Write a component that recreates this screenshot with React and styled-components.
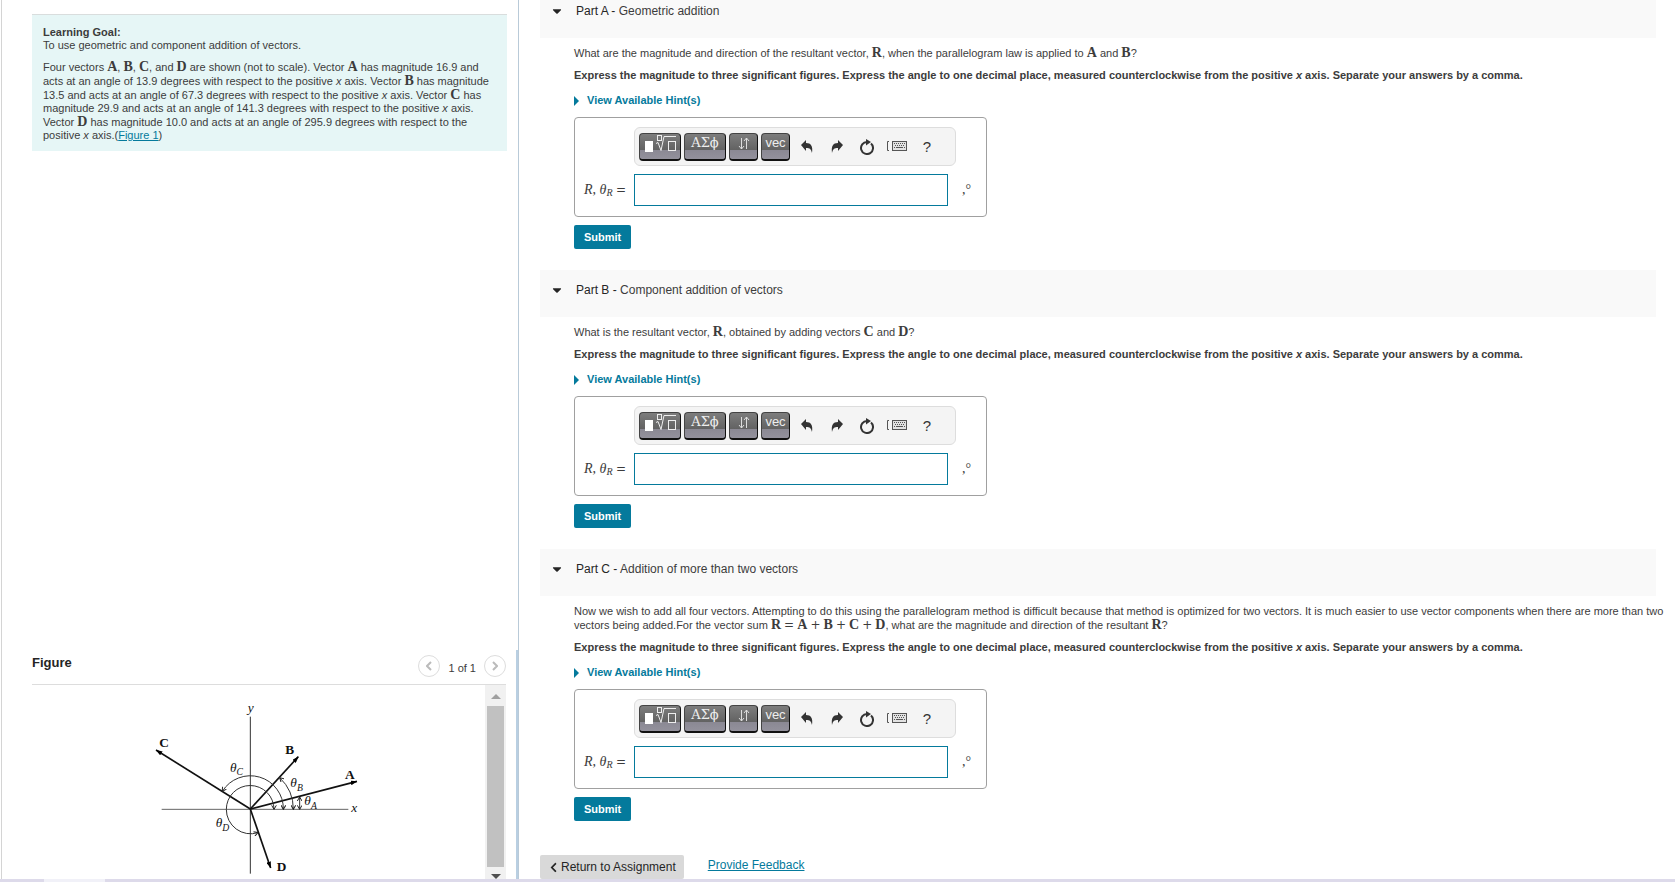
import React, { useId } from 'react'
import styled, { createGlobalStyle } from 'styled-components'
import { FaCaretDown, FaChevronLeft } from 'react-icons/fa'

const hintText = (
    <>
        Express the magnitude to three significant figures. Express the angle to one decimal place, measured
        counterclockwise from the positive <i>x</i> axis. Separate your answers by a comma.
    </>
)

const parts = [
    {
        name: 'Part A',
        title: 'Geometric addition',
        question: (
            <>
                What are the magnitude and direction of the resultant vector, <Vec>R</Vec>, when the parallelogram law is
                applied to <Vec>A</Vec> and <Vec>B</Vec>?
            </>
        ),
    },
    {
        name: 'Part B',
        title: 'Component addition of vectors',
        question: (
            <>
                What is the resultant vector, <Vec>R</Vec>, obtained by adding vectors <Vec>C</Vec> and <Vec>D</Vec>?
            </>
        ),
    },
    {
        name: 'Part C',
        title: 'Addition of more than two vectors',
        question: (
            <>
                Now we wish to add all four vectors. Attempting to do this using the parallelogram method is difficult
                because that method is optimized for two vectors. It is much easier to use vector components when there
                are more than two vectors being added.For the vector sum <Vec>R</Vec> <Op>=</Op> <Vec>A</Vec> <Op>+</Op>{' '}
                <Vec>B</Vec> <Op>+</Op> <Vec>C</Vec> <Op>+</Op> <Vec>D</Vec>, what are the magnitude and direction of the
                resultant <Vec>R</Vec>?
            </>
        ),
    },
]

function Vec({ children }) {
    return <Vector>{children}</Vector>
}

function Op({ children }) {
    return <Operator>{children}</Operator>
}

const Toolbar = () => (
    <ToolbarWrapper>
        <KeyGroup>
            <Key $wide $icon aria-label="Templates">
                <svg width="32" height="20" viewBox="0 0 32 20" fill="none" stroke="#eee">
                    <rect x="1" y="7" width="8" height="11" fill="#fff" stroke="none" />
                    <rect x="13.5" y="1.5" width="4" height="5" />
                    <path d="M12 9.500l2-1 3 8 3-14h12" />
                    <rect x="24.5" y="7.5" width="7" height="9" />
                </svg>
            </Key>
            <Key $wide $serif>ΑΣϕ</Key>
            <Key $icon aria-label="Arrows">
                <svg width="12" height="18" viewBox="0 0 12 18" fill="none" stroke="#ddd">
                    <path d="M3.500 4v11M1 12l2.500 3 2.500-3M8.500 15V4M6 7l2.500-3 2.500 3" />
                </svg>
            </Key>
            <Key>vec</Key>
        </KeyGroup>
        <ToolGroup>
            <Tool aria-label="Undo">
                <svg width="12" height="13" viewBox="0 0 12 13" fill="#333">
                    <path d="M0 5l5-5v3c5 0 7 3 6 10-1-4-2-5-6-5v3z" />
                </svg>
            </Tool>
            <Tool aria-label="Redo">
                <svg width="12" height="13" viewBox="0 0 12 13" fill="#333">
                    <path d="M12 5l-5-5v3c-5 0-7 3-6 10 1-4 2-5 6-5v3z" />
                </svg>
            </Tool>
            <Tool aria-label="Reset">
                <svg width="14" height="16" viewBox="0 0 14 16" fill="none" stroke="#333" strokeWidth="2">
                    <path d="M11 4.500A6 6 0 1 1 7 3" />
                    <path d="M6 0l5 3-5 3.500z" fill="#333" stroke="none" />
                </svg>
            </Tool>
            <Tool aria-label="Keyboard">
                <svg width="20" height="11" viewBox="0 0 20 11" fill="none" stroke="#555">
                    <path d="M2 .5H.5v9H2" />
                    <rect x="5.500" y=".5" width="14" height="9" fill="#e2e2e2" />
                    <path d="M7 2.500h11M8 4.500h10" strokeDasharray="1 1" />
                    <path d="M7 6.500h1M9 6.500h7M17 6.500h1" />
                </svg>
            </Tool>
            <Tool aria-label="Help">?</Tool>
        </ToolGroup>
    </ToolbarWrapper>
)

const Part = ({ name, title, question }) => {
    const id = useId()
    return (
        <PartSection>
            <PartHeader>
                <Collapse aria-label={`Collapse ${name}`}>
                    <FaCaretDown size={14} />
                </Collapse>
                <PartTitle>
                    <span>{name} -</span> {title}
                </PartTitle>
            </PartHeader>
            <PartBody>
                <Question>{question}</Question>
                <Instructions>{hintText}</Instructions>
                <HintButton>
                    <svg width="5" height="10" viewBox="0 0 5 10" fill="#047a9c">
                        <path d="M0 0l5 5-5 5z" />
                    </svg>
                    View Available Hint(s)
                </HintButton>
                <AnswerBox>
                    <Toolbar />
                    <AnswerLabel htmlFor={id}>
                        <i>R</i>, <i>θ</i>
                        <sub>R</sub> <Op>=</Op>
                    </AnswerLabel>
                    <AnswerInput id={id} type="text" />
                    <Unit>
                        ,<sup>°</sup>
                    </Unit>
                </AnswerBox>
                <Submit>Submit</Submit>
            </PartBody>
        </PartSection>
    )
}

const VectorDiagram = () => (
    <Diagram viewBox="0 0 750 567" role="img" aria-label="Vectors A, B, C and D">
        <defs>
            <marker id="head" viewBox="0 0 20 14" refX="19" refY="7" markerWidth="20" markerHeight="14"
                markerUnits="userSpaceOnUse" orient="auto">
                <path d="M0 0L20 7L0 14z" />
            </marker>
            <marker id="tip" viewBox="0 0 14 16" refX="13" refY="8" markerWidth="14" markerHeight="16"
                markerUnits="userSpaceOnUse" orient="auto-start-reverse">
                <path d="M1 1L13 8L1 15" fill="none" stroke="#222" strokeWidth="3" />
            </marker>
        </defs>
        <g stroke="#333" strokeWidth="3">
            <path d="M361 80V551" />
            <path d="M95 358H655" stroke="#666" />
        </g>
        <g stroke="#111" strokeWidth="5">
            <path d="M361 357L681 274" markerEnd="url(#head)" />
            <path d="M361 357L505 200" markerEnd="url(#head)" />
            <path d="M361 357L78 180" markerEnd="url(#head)" />
            <path d="M361 357L422 534" markerEnd="url(#head)" />
        </g>
        <g fill="none" stroke="#333" strokeWidth="3">
            <path d="M432 358A71 71 0 0 0 289 358A73 73 0 0 0 384 428" markerStart="url(#tip)" markerEnd="url(#tip)" />
            <path d="M460 358A99 99 0 0 0 277 304" markerStart="url(#tip)" markerEnd="url(#tip)" />
            <path d="M490 358A129 129 0 0 0 449 263" markerStart="url(#tip)" markerEnd="url(#tip)" />
            <path d="M509 358V321" markerStart="url(#tip)" markerEnd="url(#tip)" />
        </g>
        <DiagramText $bold>
            <text x="88" y="171">C</text>
            <text x="466" y="193">B</text>
            <text x="645" y="266">A</text>
            <text x="440" y="543">D</text>
        </DiagramText>
        <DiagramText>
            <text x="353" y="66">y</text>
            <text x="664" y="367">x</text>
            <text x="300" y="245">θ<tspan dy="10" fontSize="29">C</tspan></text>
            <text x="481" y="292">θ<tspan dy="10" fontSize="29">B</tspan></text>
            <text x="523" y="346">θ<tspan dy="11" fontSize="29">A</tspan></text>
            <text x="257" y="412">θ<tspan dy="10" fontSize="29">D</tspan></text>
        </DiagramText>
    </Diagram>
)

const Chevron = ({ d }) => (
    <svg width="6" height="10" viewBox="0 0 6 10" fill="none" stroke="#bbb" strokeWidth="2">
        <path d={d} />
    </svg>
)

const App = () => {
    return (
        <>
            <GlobalStyle />
            <Page>
                <Columns>
                    <Sidebar>
                        <Goal>
                            <GoalTitle>Learning Goal:</GoalTitle>
                            <GoalText>To use geometric and component addition of vectors.</GoalText>
                            <GoalDetails>
                                Four vectors <Vec>A</Vec>, <Vec>B</Vec>, <Vec>C</Vec>, and <Vec>D</Vec> are shown (not to
                                scale). Vector <Vec>A</Vec> has magnitude 16.9 and acts at an angle of 13.9 degrees with
                                respect to the positive <i>x</i> axis. Vector <Vec>B</Vec> has magnitude 13.5 and acts at
                                an angle of 67.3 degrees with respect to the positive <i>x</i> axis. Vector <Vec>C</Vec>{' '}
                                has magnitude 29.9 and acts at an angle of 141.3 degrees with respect to the positive{' '}
                                <i>x</i> axis. Vector <Vec>D</Vec> has magnitude 10.0 and acts at an angle of 295.9 degrees
                                with respect to the positive <i>x</i> axis.(<Link href="#figure">Figure 1</Link>)
                            </GoalDetails>
                        </Goal>
                        <FigurePanel id="figure">
                            <FigureHeader>
                                <FigureTitle>Figure</FigureTitle>
                                <Pager>
                                    <RoundButton aria-label="Previous figure"><Chevron d="M5 1L1 5l4 4" /></RoundButton>
                                    <PageCount>1 of 1</PageCount>
                                    <RoundButton aria-label="Next figure"><Chevron d="M1 1l4 4-4 4" /></RoundButton>
                                </Pager>
                            </FigureHeader>
                            <FigureBody>
                                <VectorDiagram />
                                <Scrollbar>
                                    <ArrowUp />
                                    <Thumb />
                                    <ArrowDown />
                                </Scrollbar>
                            </FigureBody>
                        </FigurePanel>
                    </Sidebar>
                    <Main>
                        {parts.map((part) => (
                            <Part key={part.name} {...part} />
                        ))}
                        <Footer>
                            <ReturnButton>
                                <FaChevronLeft size={11} />
                                Return to Assignment
                            </ReturnButton>
                            <Link href="#feedback">Provide Feedback</Link>
                        </Footer>
                    </Main>
                </Columns>
                <BottomStrip>
                    <StripTab />
                </BottomStrip>
            </Page>
        </>
    )
}

export default App

const GlobalStyle = createGlobalStyle`
    * {
        box-sizing: border-box;
    }
    body {
        margin: 0;
        overflow: hidden;
        background: #fff;
        color: #3c3c3c;
        font: 11px/13px "Liberation Sans", Arial, sans-serif;
    }
    button {
        padding: 0;
        border: 0;
        background: none;
        color: inherit;
        font: inherit;
        cursor: pointer;
    }
    p, h1, h2 {
        margin: 0;
    }
`
const Page = styled.div`
    display: flex;
    flex-direction: column;
    height: 100vh;
    overflow: hidden;
`
const Columns = styled.div`
    display: flex;
    flex: 1;
    min-height: 0;
    overflow: hidden;
`
const Sidebar = styled.aside`
    display: flex;
    flex: 0 0 518px;
    flex-direction: column;
    justify-content: space-between;
    margin-left: 1px;
    border-left: 1px solid #d4d4d4;
    border-right: 1px solid #b9cad8;
`
const Goal = styled.section`
    margin: 14px 11px 0 30px;
    padding: 10px 11px 9px;
    border-top: 1px solid #d9dddd;
    background: #e6f6f6;
`
const GoalTitle = styled.h2`
    font-size: 11px;
    line-height: 14px;
`
const GoalText = styled.p``
const GoalDetails = styled.p`
    margin-top: 8px;
`
const Vector = styled.b`
    font-family: "Liberation Serif", "Times New Roman", serif;
    font-size: 14px;
    line-height: 13px;
`
const Operator = styled.span`
    font-family: "DejaVu Serif", serif;
    font-size: 12px;
    line-height: 13px;
`
const Link = styled.a`
    color: #047a9c;
`
const FigurePanel = styled.section`
    padding: 5px 10px 0 30px;
    border-right: 2px solid #b9cfe2;
`
const FigureHeader = styled.header`
    display: flex;
    align-items: flex-start;
    justify-content: space-between;
    padding-bottom: 7px;
    border-bottom: 1px solid #ddd;
`
const FigureTitle = styled.h2`
    color: #252525;
    font-size: 13px;
    line-height: 16px;
`
const Pager = styled.div`
    display: flex;
    align-items: flex-end;
    gap: 8px;
`
const PageCount = styled.span`
    line-height: 18px;
`
const RoundButton = styled.button`
    display: flex;
    align-items: center;
    justify-content: center;
    width: 22px;
    height: 22px;
    border: 1px solid #ddd;
    border-radius: 50%;
`
const FigureBody = styled.div`
    display: flex;
    height: 194px;
    justify-content: space-between;
`
const Diagram = styled.svg`
    width: 250px;
    height: 189px;
    margin: 5px 0 0 98px;
`
const DiagramText = styled.g`
    fill: #111;
    font-family: "Liberation Serif", "Times New Roman", serif;
    font-size: 40px;
    font-style: ${({ $bold }) => ($bold ? 'normal' : 'italic')};
    font-weight: ${({ $bold }) => ($bold ? 'bold' : 'normal')};
`
const Scrollbar = styled.div`
    display: flex;
    flex-direction: column;
    align-items: center;
    gap: 7px;
    width: 21px;
    padding-top: 9px;
    background: #f1f1f1;
`
const ArrowUp = styled.span`
    border: 5px solid transparent;
    border-top: 0;
    border-bottom-color: #a0a0a0;
`
const ArrowDown = styled.span`
    border: 5px solid transparent;
    border-bottom: 0;
    border-top-color: #505050;
`
const Thumb = styled.div`
    flex: 1;
    width: 17px;
    background: #c1c1c1;
`
const Main = styled.main`
    flex: 1;
    min-width: 0;
    /* the first header is partly scrolled out of view */
    margin-top: -9px;
    padding: 0 19px 0 21px;
`
const PartSection = styled.section`
    margin-bottom: 21px;
`
const PartHeader = styled.header`
    display: flex;
    align-items: flex-start;
    padding: 11px 0 18px 10px;
    background: #f9f9f9;
`
const Collapse = styled.button`
    display: flex;
    align-items: center;
    width: 26px;
    height: 18px;
    color: #252525;
`
const PartTitle = styled.h2`
    font-size: 12px;
    font-weight: normal;
    line-height: 18px;

    span {
        color: #252525;
    }
`
const PartBody = styled.div`
    margin-right: -14px;
    padding: 8px 0 0 34px;
`
const Question = styled.p`
    line-height: 14px;
`
const Instructions = styled.p`
    margin-top: 9px;
    font-weight: bold;
`
const HintButton = styled.button`
    display: flex;
    align-items: center;
    gap: 8px;
    margin: 12px 0 10px;
    color: #047a9c;
    font-weight: bold;
`
const AnswerBox = styled.div`
    display: grid;
    grid-template-columns: 50px 314px auto;
    gap: 8px 0;
    width: 413px;
    padding: 9px 9px 10px;
    border: 1px solid #a0a0a0;
    border-radius: 4px;
`
const ToolbarWrapper = styled.div`
    display: flex;
    grid-column: 2 / 4;
    align-items: center;
    justify-self: start;
    width: 322px;
    height: 39px;
    padding: 0 4px;
    border: 1px solid #ddd;
    border-radius: 6px;
    background: #f4f4f4;
`
const KeyGroup = styled.div`
    display: flex;
    gap: 3px;
`
const Key = styled.button`
    display: flex;
    align-items: flex-start;
    justify-content: center;
    width: ${({ $wide }) => ($wide ? '42px' : '29px')};
    height: 28px;
    padding-top: ${({ $icon }) => ($icon ? '0' : '2px')};
    border: 1px solid #444;
    border-right-color: #111;
    border-bottom: 2px solid #111;
    border-radius: 4px;
    background: linear-gradient(#7d7d7d, #626262 64%, #8b8994 66%, #93919c);
    color: #eee;
    font-family: ${({ $serif }) => ($serif ? '"DejaVu Serif", serif' : '"Liberation Sans", Arial, sans-serif')};
    font-size: 13px;
    line-height: 14px;
`
const ToolGroup = styled.div`
    display: flex;
    align-items: center;
    padding-left: 2px;
`
const Tool = styled.button`
    display: flex;
    align-items: center;
    justify-content: center;
    width: 30px;
    height: 24px;
    color: #333;
    font-size: 15px;
`
const AnswerLabel = styled.label`
    align-self: center;
    font-family: "Liberation Serif", "Times New Roman", serif;
    font-size: 14px;
    white-space: nowrap;

    sub {
        font-size: 10px;
        font-style: italic;
        line-height: 1;
        vertical-align: -2px;
    }
`
const AnswerInput = styled.input`
    width: 100%;
    height: 32px;
    padding: 0 6px;
    border: 1px solid #047a9c;
    outline: 0;
`
const Unit = styled.span`
    align-self: center;
    padding-left: 14px;
    font-family: "Liberation Serif", "Times New Roman", serif;
    font-size: 14px;

    sup {
        font-size: 14px;
        line-height: 1;
        vertical-align: 0;
    }
`
const Submit = styled.button`
    display: block;
    margin-top: 8px;
    padding: 0 10px;
    border-radius: 2px;
    background: #047a9c;
    color: #fff;
    font-weight: bold;
    line-height: 24px;
`
const Footer = styled.footer`
    display: flex;
    align-items: flex-start;
    gap: 24px;
    margin-top: 34px;
    font-size: 12px;
    line-height: 20px;
`
const ReturnButton = styled.button`
    display: flex;
    align-items: center;
    gap: 2px;
    padding: 0 8px;
    border-radius: 2px;
    background: #d9d9d9;
    color: #252525;
    line-height: 24px;
`
const BottomStrip = styled.div`
    flex: 0 0 3px;
    padding-left: 44px;
    background: #dddaea;
`
const StripTab = styled.div`
    width: 61px;
    height: 3px;
    background: #f1f1f8;
`
